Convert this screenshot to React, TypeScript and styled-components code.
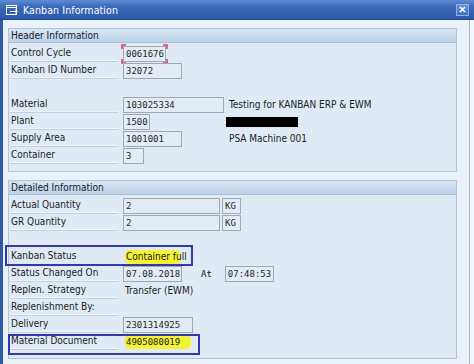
import { ReactElement, ReactNode } from 'react'
import styled, { createGlobalStyle } from 'styled-components'

const monoStack = "'DejaVu Sans Mono', 'Liberation Mono', monospace"
const sansStack = "'DejaVu Sans Condensed', 'DejaVu Sans', 'Liberation Sans', sans-serif"

const GlobalStyle = createGlobalStyle`
  html, body {
    margin: 0;
    padding: 0;
    background: #ffffff;
  }
  body {
    font-family: ${sansStack};
    font-size: 10px;
    color: #1c1c1c;
  }
`

const Window = styled.div`
  width: 474px;
  height: 364px;
  display: flex;
  flex-direction: column;
  overflow: hidden;
  background: #eaf1f8;
`

const TitleBar = styled.div`
  height: 20px;
  flex: none;
  display: flex;
  align-items: center;
  padding: 0 6px;
  box-sizing: border-box;
  background: linear-gradient(#5e8bd4 0%, #3a69ba 35%, #2d5aab 100%);
  border-bottom: 1px solid #1f4690;
  color: #ffffff;
  font-size: 10.5px;
  gap: 4px;
`

const TitleText = styled.span`
  flex: 1;
  letter-spacing: 0.1px;
`

const CloseButton = styled.div`
  width: 13px;
  height: 12px;
  margin-right: -1px;
  display: flex;
  align-items: center;
  justify-content: center;
  box-sizing: border-box;
  border: 1px solid #8fb0e4;
  background: linear-gradient(#6b95da, #3f6dbe);
`

const Body = styled.div`
  flex: 1;
  display: flex;
  border-left: 3px solid #2f5aa4;
  min-height: 0;
`

const Content = styled.div`
  flex: 1;
  display: flex;
  flex-direction: column;
  gap: 8px;
  padding: 8px 12px 0 5px;
`

const EdgeStrip = styled.div`
  width: 4px;
  flex: none;
  border-left: 1px solid #a9b6c4;
  background: #f3f6fa;
`

const Group = styled.section<{ $height: number }>`
  height: ${(p) => p.$height}px;
  box-sizing: border-box;
  border: 1px solid #b3c5d8;
  background: #dfeaf5;
  display: flex;
  flex-direction: column;
`

const GroupHeader = styled.div`
  height: 13px;
  flex: none;
  padding-left: 2px;
  line-height: 13px;
  color: #16202c;
  background: linear-gradient(#d6e5f3, #bdd3e9);
  border-bottom: 1px solid #a9bed4;
`

const Rows = styled.div`
  padding: 2px 0 0 0;
  display: flex;
  flex-direction: column;
`

const Row = styled.div<{ $callout?: 'status' | 'doc' }>`
  position: relative;
  height: 17px;
  display: flex;
  align-items: center;

  ${(p) =>
    p.$callout === 'status' &&
    `
    &::after {
      content: '';
      position: absolute;
      left: -4px;
      top: -3px;
      width: 188px;
      height: 21px;
      box-sizing: border-box;
      border: 2px solid #3438ad;
      pointer-events: none;
    }
  `}

  ${(p) =>
    p.$callout === 'doc' &&
    `
    &::after {
      content: '';
      position: absolute;
      left: -1px;
      top: 1px;
      width: 192px;
      height: 21px;
      box-sizing: border-box;
      border: 2px solid #3438ad;
      pointer-events: none;
    }
  `}
`

const Label = styled.div<{ $plain?: boolean }>`
  width: 108px;
  height: 17px;
  flex: none;
  margin-left: 1px;
  margin-right: 5px;
  padding-left: 1px;
  box-sizing: border-box;
  line-height: 16px;
  white-space: nowrap;
  border-bottom: ${(p) => (p.$plain ? 'none' : '1px solid #c2d1e0')};
  box-shadow: ${(p) => (p.$plain ? 'none' : 'inset 0 -1px 0 #eef4fa')};
`

const Field = styled.div<{ $w: number; $ml?: number }>`
  position: relative;
  width: ${(p) => p.$w}px;
  height: 16px;
  flex: none;
  margin-left: ${(p) => p.$ml ?? 0}px;
  box-sizing: border-box;
  border: 1px solid #9ea9b5;
  background: #e3ecf5;
  padding-left: 2px;
  font-family: ${monoStack};
  font-size: 9px;
  line-height: 14px;
  color: #262626;
  white-space: nowrap;
  overflow: hidden;
`

const FocusCorners = styled.svg`
  position: absolute;
  left: -2px;
  top: -2px;
  overflow: visible;
  pointer-events: none;
`

const FocusWrap = styled.div`
  position: relative;
  display: flex;
`

const Desc = styled.span<{ $ml?: number; $mono?: boolean }>`
  margin-left: ${(p) => p.$ml ?? 0}px;
  white-space: nowrap;
  font-family: ${(p) => (p.$mono ? monoStack : sansStack)};
  font-size: ${(p) => (p.$mono ? '9px' : '10px')};
`

const Redacted = styled.div<{ $ml: number }>`
  width: 72px;
  height: 10px;
  margin-left: ${(p) => p.$ml}px;
  background: #000000;
`

const Highlight = styled.span<{ $mono?: boolean; $w: number }>`
  display: inline-block;
  width: ${(p) => p.$w}px;
  height: 14px;
  line-height: 14px;
  margin-left: 2px;
  padding-left: 1px;
  box-sizing: border-box;
  border-radius: 5px;
  background: #f3f334;
  white-space: nowrap;
  font-family: ${(p) => (p.$mono ? monoStack : sansStack)};
  font-size: ${(p) => (p.$mono ? '9px' : '10px')};
  color: #1a1a1a;
`

const WindowIcon = (): ReactElement => (
  <svg width="13" height="12" viewBox="0 0 13 12">
    <rect x="0.5" y="1.5" width="10" height="9" fill="none" stroke="#ffffff" strokeWidth="1" />
    <line x1="0.5" y1="3.5" x2="10.5" y2="3.5" stroke="#ffffff" />
    <path d="M4 7.5 H11 M9 5.5 L11.5 7.5 L9 9.5" fill="none" stroke="#ffffff" strokeWidth="1" />
  </svg>
)

const CloseIcon = (): ReactElement => (
  <svg width="7" height="7" viewBox="0 0 7 7">
    <path d="M1 1 L6 6 M6 1 L1 6" stroke="#ffffff" strokeWidth="1.6" />
  </svg>
)

const Focused = ({ w, children }: { w: number; children: ReactNode }): ReactElement => {
  const W = w + 4
  const H = 20
  const a = 5
  const c = '#d2475a'
  return (
    <FocusWrap>
      <Field $w={w}>{children}</Field>
      <FocusCorners width={W} height={H}>
        <path
          d={`M1 ${a} V1 H${a} M${W - a} 1 H${W - 1} V${a} M${W - 1} ${H - a} V${H - 1} H${W - a} M${a} ${H - 1} H1 V${H - a}`}
          fill="none"
          stroke={c}
          strokeWidth="1.6"
        />
      </FocusCorners>
    </FocusWrap>
  )
}

const App = (): ReactElement => {
  return (
    <>
      <GlobalStyle />
      <Window>
        <TitleBar>
          <WindowIcon />
          <TitleText>Kanban Information</TitleText>
          <CloseButton>
            <CloseIcon />
          </CloseButton>
        </TitleBar>
        <Body>
          <Content>
            <Group $height={144}>
              <GroupHeader>Header Information</GroupHeader>
              <Rows>
                <Row>
                  <Label>Control Cycle</Label>
                  <Focused w={43}>0061676</Focused>
                </Row>
                <Row>
                  <Label>Kanban ID Number</Label>
                  <Field $w={59}>32072</Field>
                </Row>
                <Row />
                <Row>
                  <Label>Material</Label>
                  <Field $w={101}>103025334</Field>
                  <Desc $ml={5}>Testing for KANBAN ERP &amp; EWM</Desc>
                </Row>
                <Row>
                  <Label>Plant</Label>
                  <Field $w={27}>1500</Field>
                  <Redacted $ml={76} />
                </Row>
                <Row>
                  <Label>Supply Area</Label>
                  <Field $w={59}>1001001</Field>
                  <Desc $ml={47}>PSA Machine 001</Desc>
                </Row>
                <Row>
                  <Label>Container</Label>
                  <Field $w={21}>3</Field>
                </Row>
              </Rows>
            </Group>

            <Group $height={179}>
              <GroupHeader>Detailed Information</GroupHeader>
              <Rows>
                <Row>
                  <Label>Actual Quantity</Label>
                  <Field $w={97}>2</Field>
                  <Field $w={19} $ml={2}>KG</Field>
                </Row>
                <Row>
                  <Label>GR Quantity</Label>
                  <Field $w={97}>2</Field>
                  <Field $w={19} $ml={2}>KG</Field>
                </Row>
                <Row />
                <Row $callout="status">
                  <Label $plain>Kanban Status</Label>
                  <Highlight $w={56}>Container full</Highlight>
                </Row>
                <Row>
                  <Label>Status Changed On</Label>
                  <Field $w={59}>07.08.2018</Field>
                  <Desc $ml={19} $mono>At</Desc>
                  <Field $w={49} $ml={13}>07:48:53</Field>
                </Row>
                <Row>
                  <Label>Replen. Strategy</Label>
                  <Desc $ml={2}>Transfer (EWM)</Desc>
                </Row>
                <Row>
                  <Label>Replenishment By:</Label>
                </Row>
                <Row>
                  <Label>Delivery</Label>
                  <Field $w={70}>2301314925</Field>
                </Row>
                <Row $callout="doc">
                  <Label>Material Document</Label>
                  <Highlight $w={66} $mono>4905080019</Highlight>
                </Row>
              </Rows>
            </Group>
          </Content>
          <EdgeStrip />
        </Body>
      </Window>
    </>
  )
}

export default App
